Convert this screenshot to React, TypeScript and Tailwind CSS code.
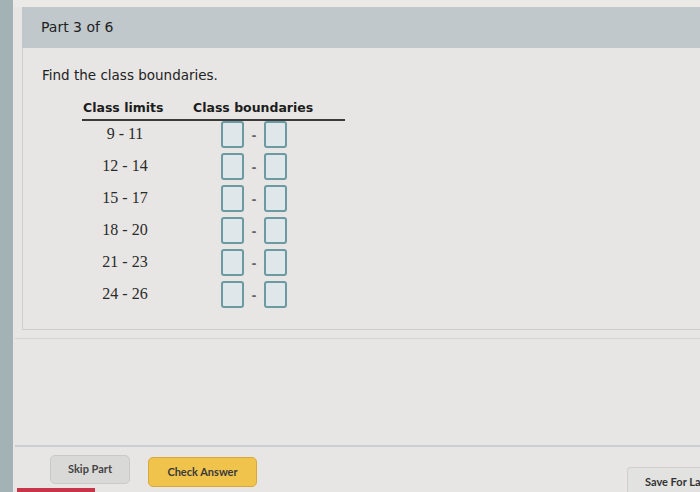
import React from "react";

const rows = ["9 - 11", "12 - 14", "15 - 17", "18 - 20", "21 - 23", "24 - 26"];

function Box() {
  return <div className="w-[23px] h-[27px] rounded-[3px] border-2 border-[#6c9aa3] bg-[#dfe7ea]" />;
}

export default function App() {
  return (
    <div className="w-[700px] h-[492px] bg-[#e7e6e4] flex overflow-hidden relative font-['DejaVu_Sans',sans-serif] text-[#2a2a2a]">
      <div className="w-[13px] h-full bg-[#a3b2b5]" />
      <div className="flex-1 flex flex-col">
        <div className="h-[7px] bg-[#eceae7]" />
        <div className="ml-[9px] h-[41px] bg-[#c0c8cc] flex items-center pl-[19px] text-[14px] text-[#222]">
          Part 3 of 6
        </div>
        <div className="ml-[9px] h-[282px] border-l border-b border-[#cfcfcd] pl-[19px] pt-[17px]">
          <div className="text-[13.5px] text-[#222]">Find the class boundaries.</div>
          <div className="ml-[40px] mt-[14px] w-[263px]">
            <div className="flex text-[12.5px] font-bold text-[#1c1c1c] pb-[1px] border-b-2 border-[#3a3a3a]">
              <div className="w-[111px] pl-[1px]">Class limits</div>
              <div>Class boundaries</div>
            </div>
            <div className="flex flex-col -mt-[3px]">
              {rows.map((r, i) => (
                <div key={i} className="flex items-center h-[32px]">
                  <div className="w-[86px] text-center font-['Liberation_Serif',serif] text-[16px] text-[#2a2a2a]">{r}</div>
                  <div className="ml-[53px] flex items-center">
                    <Box />
                    <div className="w-[20px] text-center text-[12px] font-bold text-[#666] leading-none pt-[4px]">-</div>
                    <Box />
                  </div>
                </div>
              ))}
            </div>
          </div>
        </div>
        <div className="ml-[2px] mt-[8px] border-t border-[#d3d3d1]" />
        <div className="flex-1" />
        <div className="ml-[2px] border-t-2 border-[#c9cfd0] h-[47px] relative flex items-start font-['Lato',sans-serif]">
          <div className="ml-[35px] mt-[8px] w-[80px] h-[29px] rounded-[5px] bg-[#d9d9d8] border border-[#c9c9c8] flex items-center justify-center text-[11px] font-bold text-[#444]">
            Skip Part
          </div>
          <div className="ml-[18px] mt-[10px] w-[109px] h-[30px] rounded-[5px] bg-[#f0c44c] border border-[#d8a83a] flex items-center justify-center text-[11px] font-bold text-[#3a3a3a]">
            Check Answer
          </div>
          <div className="absolute right-0 top-[20px] w-[73px] h-[28px] bg-[#e2e2e0] border-l border-t border-[#cfcfcd] rounded-tl-[4px] pl-[17px] pt-[6px] text-[11px] font-bold text-[#333] whitespace-nowrap overflow-hidden">
            Save For Later
          </div>
          <div className="absolute left-[2px] bottom-0 w-[78px] h-[4px] bg-[#c8344a]" />
        </div>
      </div>
    </div>
  );
}
